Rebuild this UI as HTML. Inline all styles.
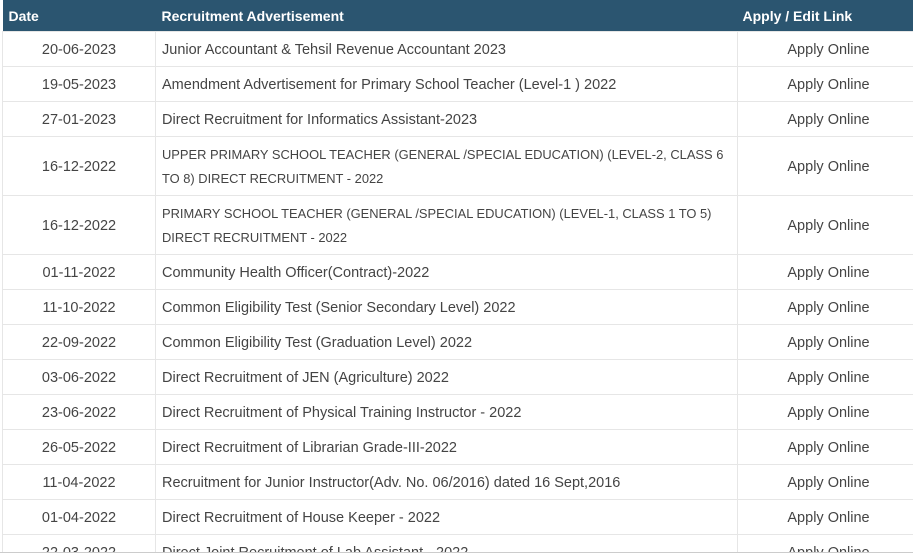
<!DOCTYPE html>
<html><head><style>
html,body{margin:0;padding:0;background:#fff;width:913px;height:556px;overflow:hidden}
.wrap{position:absolute;left:0;top:0;width:913px;height:552px;overflow:hidden;border-bottom:1px solid #ccc}
table{border-collapse:collapse;table-layout:fixed;position:absolute;left:2px;top:0;width:911px;font-family:"Liberation Sans",sans-serif;font-size:14.5px;color:#444}
th{background:#2b5570;color:#fff;font-weight:bold;text-align:left;height:31px;padding:0 0 0 6px;font-size:14px;vertical-align:middle}
td{border:1px solid #e6e6e6;height:33px;padding:1px 6px 0;vertical-align:middle;line-height:24px;white-space:nowrap;overflow:hidden}
td.d{text-align:center}
td.a{text-align:center;padding-left:12px}
tr.t td{height:57px}
.u{font-size:12.9px}
</style></head><body><div class="wrap">
<table>
<colgroup><col style="width:153px"><col style="width:582px"><col style="width:176px"></colgroup>
<tr><th>Date</th><th>Recruitment Advertisement</th><th style="padding-left:5px">Apply / Edit Link</th></tr>
<tr><td class="d">20-06-2023</td><td>Junior Accountant &amp; Tehsil Revenue Accountant 2023</td><td class="a">Apply Online</td></tr>
<tr><td class="d">19-05-2023</td><td>Amendment Advertisement for Primary School Teacher (Level-1 ) 2022</td><td class="a">Apply Online</td></tr>
<tr><td class="d">27-01-2023</td><td>Direct Recruitment for Informatics Assistant-2023</td><td class="a">Apply Online</td></tr>
<tr class="t"><td class="d">16-12-2022</td><td><span class="u">UPPER PRIMARY SCHOOL TEACHER (GENERAL /SPECIAL EDUCATION) (LEVEL-2, CLASS 6<br>TO 8) DIRECT RECRUITMENT - 2022</span></td><td class="a">Apply Online</td></tr>
<tr class="t"><td class="d">16-12-2022</td><td><span class="u">PRIMARY SCHOOL TEACHER (GENERAL /SPECIAL EDUCATION) (LEVEL-1, CLASS 1 TO 5)<br>DIRECT RECRUITMENT - 2022</span></td><td class="a">Apply Online</td></tr>
<tr><td class="d">01-11-2022</td><td>Community Health Officer(Contract)-2022</td><td class="a">Apply Online</td></tr>
<tr><td class="d">11-10-2022</td><td>Common Eligibility Test (Senior Secondary Level) 2022</td><td class="a">Apply Online</td></tr>
<tr><td class="d">22-09-2022</td><td>Common Eligibility Test (Graduation Level) 2022</td><td class="a">Apply Online</td></tr>
<tr><td class="d">03-06-2022</td><td>Direct Recruitment of JEN (Agriculture) 2022</td><td class="a">Apply Online</td></tr>
<tr><td class="d">23-06-2022</td><td>Direct Recruitment of Physical Training Instructor - 2022</td><td class="a">Apply Online</td></tr>
<tr><td class="d">26-05-2022</td><td>Direct Recruitment of Librarian Grade-III-2022</td><td class="a">Apply Online</td></tr>
<tr><td class="d">11-04-2022</td><td>Recruitment for Junior Instructor(Adv. No. 06/2016) dated 16 Sept,2016</td><td class="a">Apply Online</td></tr>
<tr><td class="d">01-04-2022</td><td>Direct Recruitment of House Keeper - 2022</td><td class="a">Apply Online</td></tr>
<tr><td class="d">22-03-2022</td><td>Direct Joint Recruitment of Lab Assistant - 2022</td><td class="a">Apply Online</td></tr>
</table></div></body></html>
